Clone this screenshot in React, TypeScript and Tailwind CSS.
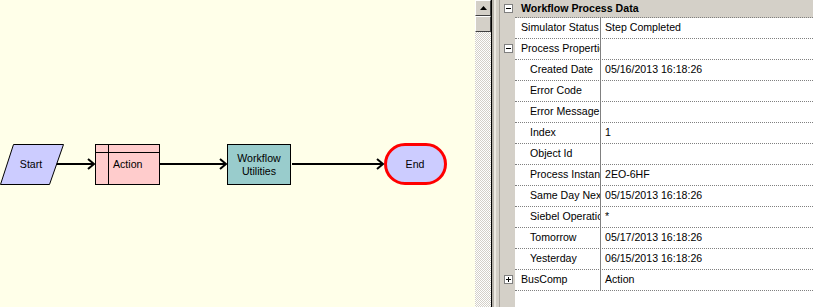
import clsx from "clsx";

type Prop = { label: string; value?: string; level?: number; toggle?: "minus" | "plus" };

const props: Prop[] = [
  { label: "Simulator Status", value: "Step Completed" },
  { label: "Process Properties", toggle: "minus" },
  { label: "Created Date", value: "05/16/2013 16:18:26", level: 1 },
  { label: "Error Code", level: 1 },
  { label: "Error Message", level: 1 },
  { label: "Index", value: "1", level: 1 },
  { label: "Object Id", level: 1 },
  { label: "Process Instance", value: "2EO-6HF", level: 1 },
  { label: "Same Day Next Day", value: "05/15/2013 16:18:26", level: 1 },
  { label: "Siebel Operation", value: "*", level: 1 },
  { label: "Tomorrow", value: "05/17/2013 16:18:26", level: 1 },
  { label: "Yesterday", value: "06/15/2013 16:18:26", level: 1 },
  { label: "BusComp", value: "Action", toggle: "plus" },
];

function Toggle({ kind }: { kind: "minus" | "plus" }) {
  return (
    <div className="relative h-[9px] w-[9px] border border-[#808080] bg-white">
      <div className="absolute left-[1px] top-[3px] h-px w-[5px] bg-black" />
      {kind === "plus" && <div className="absolute left-[3px] top-[1px] h-[5px] w-px bg-black" />}
    </div>
  );
}

function Diagram() {
  const font = { fontFamily: "'Liberation Sans', Arial, sans-serif", fontSize: 10.6 };
  return (
    <svg width="475" height="307" className="block">
      <g stroke="#000" strokeWidth="2" fill="none">
        <line x1="55" y1="164" x2="94" y2="164" />
        <polyline points="88,159 94,164 88,169" />
        <line x1="160" y1="164" x2="226" y2="164" />
        <polyline points="220,159 226,164 220,169" />
        <line x1="292" y1="164" x2="383" y2="164" />
        <polyline points="377,159 383,164 377,169" />
      </g>
      <polygon points="13.5,144.5 63.5,144.5 49.5,184.5 0.5,184.5" fill="#ccccff" stroke="#000" />
      <text x="31" y="168" textAnchor="middle" style={font}>Start</text>

      <rect x="95.5" y="144.5" width="64" height="40" fill="#ffcccc" stroke="#000" />
      <line x1="95.5" y1="152.5" x2="159.5" y2="152.5" stroke="#000" />
      <line x1="108.5" y1="144.5" x2="108.5" y2="184.5" stroke="#000" />
      <text x="113" y="168" style={font}>Action</text>

      <rect x="227.5" y="144.5" width="63" height="40" fill="#99cccc" stroke="#000" />
      <text x="259" y="162" textAnchor="middle" style={font}>Workflow</text>
      <text x="259" y="175" textAnchor="middle" style={font}>Utilities</text>

      <rect x="385.5" y="144.5" width="60" height="39" rx="19.5" fill="#ccccff" stroke="#ff0000" strokeWidth="3" />
      <text x="415" y="168" textAnchor="middle" style={font}>End</text>
    </svg>
  );
}

export default function App() {
  return (
    <div className="flex h-[307px] w-[813px] overflow-hidden font-['Liberation_Sans',Arial,sans-serif] text-[10.6px] text-black">
      <div className="w-[475px] shrink-0 bg-[#ffffe9]">
        <Diagram />
      </div>

      {/* scrollbar */}
      <div className="flex w-[16px] shrink-0 flex-col">
        <div className="flex h-[16px] items-center justify-center border border-b-[#404040] border-l-white border-r-[#404040] border-t-white bg-[#d4d0c8]">
          <svg width="7" height="4">
            <polygon points="3.5,0 7,4 0,4" fill="#000" />
          </svg>
        </div>
        <div className="h-[16px] border border-b-[#404040] border-l-white border-r-[#404040] border-t-white bg-[#d4d0c8]" />
        <div className="flex-1 bg-[repeating-conic-gradient(#d4d0c8_0_25%,#ffffff_0_50%)] bg-[length:2px_2px]" />
      </div>

      {/* splitter */}
      <div className="w-px shrink-0 bg-black" />
      <div className="flex w-[8px] shrink-0">
        <div className="w-[2px] bg-[#b8b4ac]" />
        <div className="w-[2px] bg-[#ece9e2]" />
        <div className="w-[3px] bg-[#d4d0c8]" />
        <div className="w-px bg-[#a8a49c]" />
      </div>

      {/* property grid */}
      <div className="flex flex-1 flex-col bg-white">
        <div className="flex h-[18px] bg-[#d4d0c8]">
          <div className="flex w-[15px] shrink-0 items-center justify-end pb-px pr-[2px]">
            <Toggle kind="minus" />
          </div>
          <div className="flex flex-1 items-center border-b border-dotted border-[#808080] pl-[6px] font-bold">
            Workflow Process Data
          </div>
        </div>
        {props.map((p) => (
          <div key={p.label} className="flex h-[21px]">
            <div className="flex w-[15px] shrink-0 items-center justify-end bg-[#d4d0c8] pb-[2px] pr-[2px]">
              {p.toggle && <Toggle kind={p.toggle} />}
            </div>
            <div className="flex flex-1 border-b border-dotted border-[#808080]">
              <div
                className={clsx(
                  "flex w-[86px] shrink-0 items-center overflow-hidden whitespace-nowrap border-r border-solid border-[#808080]",
                  p.level ? "pl-[15px]" : "pl-[6px]"
                )}
              >
                {p.label}
              </div>
              <div className="flex flex-1 items-center overflow-hidden whitespace-nowrap pl-[4px]">{p.value}</div>
            </div>
          </div>
        ))}
        <div className="flex flex-1">
          <div className="w-[15px] shrink-0 bg-[#d4d0c8]" />
          <div className="flex-1" />
        </div>
      </div>
    </div>
  );
}
